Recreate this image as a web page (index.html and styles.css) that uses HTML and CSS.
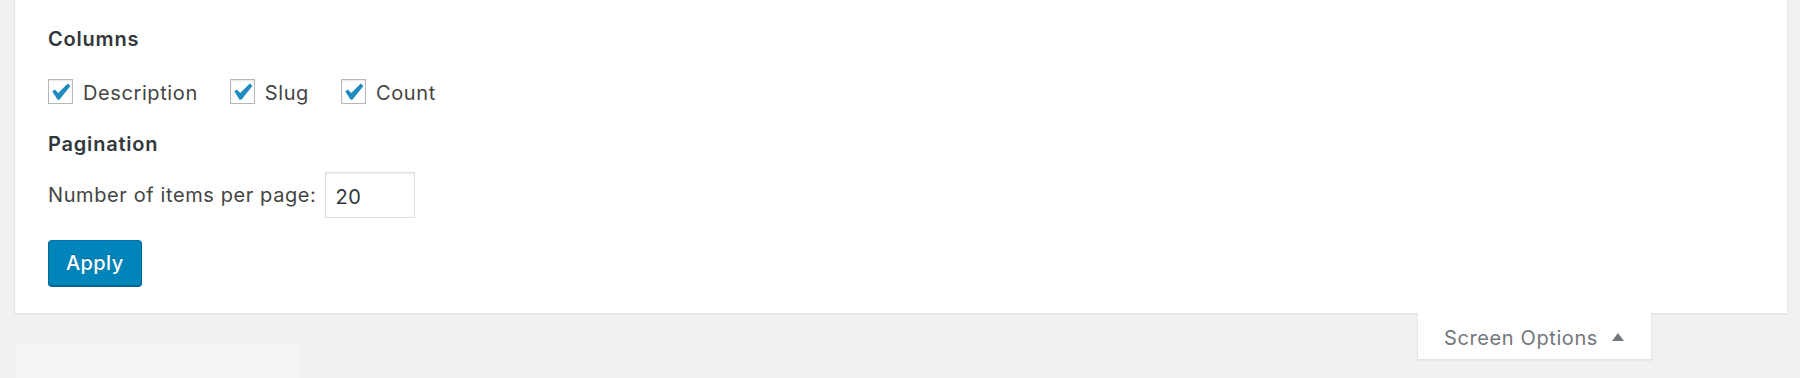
FILE: index.html
```html
<!DOCTYPE html>
<html lang="en">
<head>
<meta charset="utf-8">
<title>Screen Options</title>
<link rel="stylesheet" href="styles.css">
</head>
<body>
<div class="wrap">
  <div class="panel">
    <fieldset class="group group-columns">
      <h5 class="legend">Columns</h5>
      <div class="checks">
        <label class="check"><span class="cb"><svg viewBox="0 0 25 25" width="25" height="25"><path d="M4.3 12.6 L6.9 10.4 L10.2 13.9 L19.8 4.6 L22.4 6.9 L11.4 20.8 L9.6 20.8 Z"/></svg></span><span class="lbl">Description</span></label>
        <label class="check"><span class="cb"><svg viewBox="0 0 25 25" width="25" height="25"><path d="M4.3 12.6 L6.9 10.4 L10.2 13.9 L19.8 4.6 L22.4 6.9 L11.4 20.8 L9.6 20.8 Z"/></svg></span><span class="lbl">Slug</span></label>
        <label class="check"><span class="cb"><svg viewBox="0 0 25 25" width="25" height="25"><path d="M4.3 12.6 L6.9 10.4 L10.2 13.9 L19.8 4.6 L22.4 6.9 L11.4 20.8 L9.6 20.8 Z"/></svg></span><span class="lbl">Count</span></label>
      </div>
    </fieldset>
    <fieldset class="group group-pagination">
      <h5 class="legend">Pagination</h5>
      <div class="per-page">
        <label class="lbl" for="perpage">Number of items per page:</label>
        <input id="perpage" class="num" type="text" value="20">
      </div>
    </fieldset>
    <div class="submit"><button class="btn-primary" type="button">Apply</button></div>
  </div>
  <div class="links">
    <div class="faint"></div>
    <button class="toggle" type="button"><span>Screen Options</span><svg class="arrow" width="12" height="8" viewBox="0 0 12 8"><path d="M6 0 L12 8 L0 8 Z"/></svg></button>
  </div>
</div>
</body>
</html>
```

FILE: styles.css
```css
html, body {
  margin: 0;
  padding: 0;
}
body {
  background: #f1f1f1;
  font-family: Inter, "Liberation Sans", Arial, sans-serif;
  font-size: 20px;
  line-height: 28px;
  letter-spacing: 0.6px;
  color: #444;
  height: 378px;
  overflow: hidden;
}
.wrap {
  padding: 0 12px 0 14px;
}
.panel {
  background: #fff;
  border: 1px solid #e5e5e5;
  border-top: 0;
  box-shadow: 0 1px 1px rgba(0, 0, 0, 0.04);
  padding: 25px 33px 27px;
}
.group {
  border: 0;
  margin: 0;
  padding: 0;
  min-width: 0;
}
.legend {
  margin: 0;
  font-size: 20px;
  line-height: 28px;
  font-weight: 600;
  letter-spacing: 0.8px;
  color: #32373c;
}
.checks {
  display: flex;
  gap: 32px;
  margin-top: 26px;
}
.check {
  display: flex;
  align-items: flex-start;
  gap: 10px;
}
.cb {
  width: 25px;
  height: 25px;
  box-sizing: border-box;
  border: 1px solid #b4b9be;
  background: #fff;
  box-shadow: inset 0 1px 2px rgba(0, 0, 0, 0.1);
  display: flex;
  align-items: center;
  justify-content: center;
}
.cb svg {
  width: 25px;
  height: 25px;
  flex: none;
  fill: #1e8cbe;
}
.lbl {
  color: #444;
}
.group-pagination {
  margin-top: 23px;
}
.per-page {
  display: flex;
  align-items: center;
  gap: 9px;
  margin-top: 14px;
}
.num {
  width: 90px;
  height: 46px;
  box-sizing: border-box;
  border: 1px solid #ddd;
  box-shadow: inset 0 1px 2px rgba(0, 0, 0, 0.07);
  padding: 3px 9px 0;
  font-family: inherit;
  font-size: 20px;
  letter-spacing: 0.6px;
  color: #32373c;
  background: #fff;
  outline: none;
  margin: 0;
}
.submit {
  margin-top: 22px;
}
.btn-primary {
  display: block;
  height: 46px;
  box-sizing: border-box;
  padding: 0 17px;
  margin: 0;
  background: #0085ba;
  border: 1px solid;
  border-color: #0073aa #006799 #006799;
  border-radius: 4px;
  box-shadow: 0 1px 0 #006799;
  color: #fff;
  font-family: inherit;
  font-size: 20px;
  font-weight: 500;
  letter-spacing: 0.4px;
  line-height: 44px;
  text-shadow: 0 -1px 1px #006799;
}
.links {
  display: flex;
  justify-content: space-between;
  align-items: flex-start;
  margin-top: -1px;
  padding-right: 136px;
}
.faint {
  width: 285px;
  height: 40px;
  margin: 30px 0 0 2px;
  background: #f4f4f4;
}
.toggle {
  display: flex;
  align-items: center;
  background: #fff;
  border: 1px solid #e5e5e5;
  border-top: 0;
  box-shadow: 0 1px 1px rgba(0, 0, 0, 0.04);
  margin: 0;
  padding: 11px 27px 7px 26px;
  font-family: inherit;
  font-size: 20px;
  line-height: 28px;
  letter-spacing: 0.6px;
  color: #72777c;
}
.arrow {
  margin-left: 14px;
  margin-top: -3px;
  fill: #72777c;
}
```
